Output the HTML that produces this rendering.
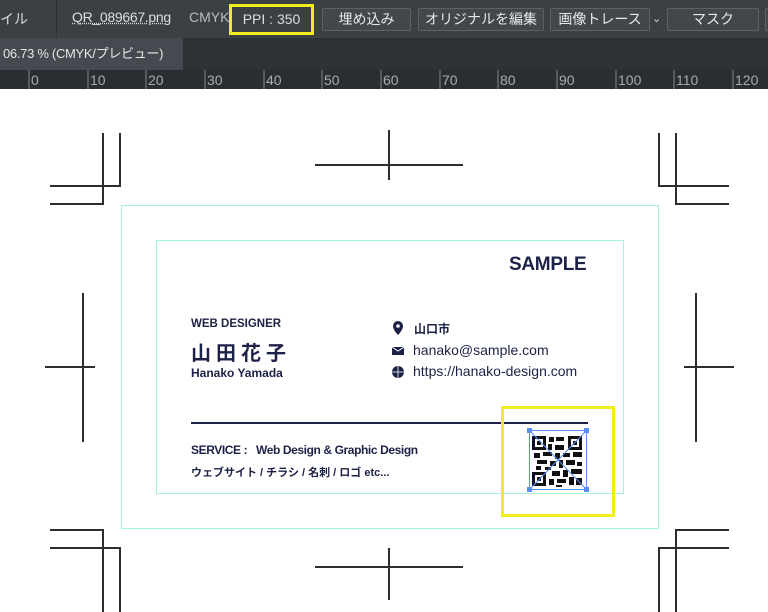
<!DOCTYPE html>
<html><head><meta charset="utf-8"><style>
*{margin:0;padding:0;box-sizing:border-box}
body{width:768px;height:612px;overflow:hidden;background:#fff;position:relative;font-family:"Liberation Sans","Noto Sans CJK JP",sans-serif}
.a{position:absolute}
.tb{left:0;top:0;width:768px;height:38px;background:#3b4045}
.t2{left:0;top:38px;width:768px;height:32px;background:#2e3236}
.tab{left:0;top:38px;width:183px;height:32px;background:#454a50;color:#e6e6e6;font-size:13px;line-height:32px;padding-left:3px;letter-spacing:-.3px}
.ru{left:0;top:70px;width:768px;height:19px;background:#2a2d31;color:#aaa;font-size:14px}
.btn{top:8px;height:23px;border:1px solid #5c6166;border-radius:2px;background:#42474c;color:#e8e8e8;font-size:14px;line-height:21px;text-align:center}
.tx{color:#ddd;font-size:14px;top:9px}
.nv{color:#1c2247}
</style></head><body>
<div class="a tb"></div>
<div class="a tx" style="left:0">イル</div>
<div class="a" style="left:56px;top:0;width:1px;height:38px;background:#2e3236"></div>
<div class="a tx" style="left:72px;text-decoration:underline dotted;letter-spacing:-.3px">QR_089667.png</div>
<div class="a tx" style="left:189px;color:#bbb">CMYK</div>
<div class="a" style="left:229px;top:4px;width:85px;height:31px;border:3px solid #f0ec1e;background:#3b4045;color:#ddd;font-size:14px;line-height:25px;text-align:center">PPI : 350</div>
<div class="a btn" style="left:322px;width:89px">埋め込み</div>
<div class="a btn" style="left:418px;width:126px">オリジナルを編集</div>
<div class="a btn" style="left:550px;width:100px">画像トレース</div>
<div class="a tx" style="left:652px;font-size:11px;top:12px">⌄</div>
<div class="a btn" style="left:667px;width:92px">マスク</div>
<div class="a btn" style="left:765px;width:10px"></div>
<div class="a t2"></div>
<div class="a tab">06.73 % (CMYK/プレビュー)</div>
<div class="a ru"><svg width="768" height="19" style="position:absolute;left:0;top:0"><g stroke="#888" stroke-width="1">
<line x1="29" y1="0" x2="29" y2="19"/><line x1="88" y1="0" x2="88" y2="19"/><line x1="146" y1="0" x2="146" y2="19"/><line x1="205" y1="0" x2="205" y2="19"/><line x1="264" y1="0" x2="264" y2="19"/><line x1="322" y1="0" x2="322" y2="19"/><line x1="381" y1="0" x2="381" y2="19"/><line x1="440" y1="0" x2="440" y2="19"/><line x1="498" y1="0" x2="498" y2="19"/><line x1="557" y1="0" x2="557" y2="19"/><line x1="616" y1="0" x2="616" y2="19"/><line x1="674" y1="0" x2="674" y2="19"/><line x1="733" y1="0" x2="733" y2="19"/></g>
<g fill="#aaa" font-size="14" font-family="Liberation Sans"><text x="31" y="15">0</text><text x="90" y="15">10</text><text x="148" y="15">20</text><text x="207" y="15">30</text><text x="266" y="15">40</text><text x="324" y="15">50</text><text x="383" y="15">60</text><text x="442" y="15">70</text><text x="500" y="15">80</text><text x="559" y="15">90</text><text x="618" y="15">100</text><text x="676" y="15">110</text><text x="735" y="15">120</text></g></svg></div>

<svg class="a" style="left:0;top:0" width="768" height="612">
<g stroke="#2a2e30" stroke-width="2" fill="none">
<path d="M103 133V204H50M120 133V186H50"/>
<path d="M676 133V204H729M659 133V186H729"/>
<path d="M103 612V530H50M120 612V548H50"/>
<path d="M676 612V530H729M659 612V548H729"/>
<path d="M315 165H463M389 130V180M315 567H463M389 548V600"/>
<path d="M45 367H95M83 293V442M684 367H734M696 293V442"/>
</g>
<rect x="121.5" y="205.5" width="537" height="323" fill="none" stroke="#a6f3e4"/>
<rect x="156.5" y="240.5" width="467" height="253" fill="none" stroke="#a6f3e4"/>
<line x1="191" y1="423" x2="588" y2="423" stroke="#1c2247" stroke-width="2"/>
<rect x="502.5" y="407.5" width="111" height="108" fill="none" stroke="#f0ec1e" stroke-width="3"/>
<g fill="#111">
<rect x="532" y="436" width="14" height="14"/><rect x="568" y="436" width="14" height="14"/><rect x="532" y="472" width="14" height="14"/>
<rect x="549" y="437" width="5" height="5"/><rect x="556" y="437" width="8" height="4"/><rect x="548" y="444" width="4" height="6"/><rect x="555" y="445" width="9" height="5"/>
<rect x="534" y="453" width="6" height="5"/><rect x="543" y="452" width="9" height="4"/><rect x="555" y="453" width="5" height="6"/><rect x="563" y="453" width="7" height="4"/><rect x="573" y="452" width="9" height="5"/>
<rect x="537" y="460" width="10" height="4"/><rect x="550" y="461" width="6" height="5"/><rect x="559" y="460" width="4" height="8"/><rect x="566" y="460" width="9" height="5"/><rect x="577" y="462" width="5" height="4"/>
<rect x="536" y="466" width="5" height="4"/><rect x="545" y="467" width="6" height="3"/><rect x="552" y="471" width="8" height="5"/><rect x="563" y="470" width="5" height="7"/><rect x="571" y="469" width="11" height="5"/>
<rect x="549" y="479" width="5" height="6"/><rect x="557" y="479" width="9" height="4"/><rect x="569" y="477" width="5" height="8"/><rect x="576" y="478" width="6" height="7"/><rect x="556" y="485" width="6" height="2"/></g>
<g fill="#fff"><rect x="535" y="439" width="8" height="8"/><rect x="571" y="439" width="8" height="8"/><rect x="535" y="475" width="8" height="8"/></g>
<g fill="#111"><rect x="537" y="441" width="4" height="4"/><rect x="573" y="441" width="4" height="4"/><rect x="537" y="477" width="4" height="4"/></g>
<g stroke="#5b8ff0" stroke-width="1" fill="none"><rect x="529.5" y="430.5" width="57" height="59"/><path d="M530 431L586 489M586 431L530 489"/></g>
<g fill="#5b8ff0"><rect x="527" y="428" width="5" height="5"/><rect x="584" y="428" width="5" height="5"/><rect x="527" y="487" width="5" height="5"/><rect x="584" y="487" width="5" height="5"/></g>
<path d="M398 321a5 5 0 0 1 5 5c0 4-5 9-5 9s-5-5-5-9a5 5 0 0 1 5-5z" fill="#1c2247"/><circle cx="398" cy="326" r="1.8" fill="#fff"/>
<rect x="392" y="347" width="12" height="8" fill="#1c2247"/><path d="M392 347l6 4 6-4" stroke="#fff" fill="none"/>
<circle cx="398" cy="372" r="6" fill="#1c2247"/><path d="M392 372h12M398 366v12" stroke="#fff" stroke-width=".8"/>
</svg>
<div class="a nv" style="left:509px;top:254px;font-size:19px;font-weight:bold;letter-spacing:-.3px">SAMPLE</div>
<div class="a nv" style="left:191px;top:318px;font-size:11.5px;font-weight:bold">WEB DESIGNER</div>
<div class="a nv" style="left:191px;top:337px;font-size:20px;letter-spacing:5px;font-weight:bold">山田花子</div>
<div class="a nv" style="left:191px;top:366px;font-size:12px;font-weight:bold">Hanako Yamada</div>
<div class="a nv" style="left:414px;top:320px;font-size:12px;font-weight:bold">山口市</div>
<div class="a nv" style="left:413px;top:342px;font-size:14px">hanako@sample.com</div>
<div class="a nv" style="left:413px;top:363px;font-size:14px">https://hanako-design.com</div>
<div class="a nv" style="left:191px;top:443px;font-size:12px;font-weight:bold;letter-spacing:-.4px">SERVICE :&nbsp;&nbsp; Web Design &amp; Graphic Design</div>
<div class="a nv" style="left:191px;top:464px;font-size:11px;font-weight:bold">ウェブサイト / チラシ / 名刺 / ロゴ etc...</div>
</body></html>
